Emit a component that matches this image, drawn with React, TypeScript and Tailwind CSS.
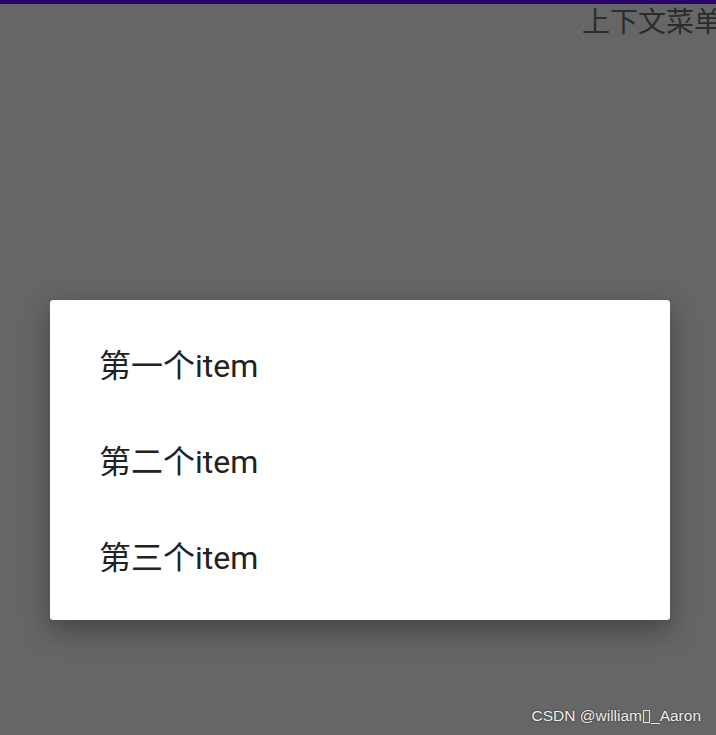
import React from "react";

export default function App() {
  const items = ["第一个item", "第二个item", "第三个item"];
  return (
    <div
      className="relative w-[716px] h-[735px] overflow-hidden bg-[#666666]"
      style={{ fontFamily: 'Roboto, "Noto Sans CJK SC", sans-serif' }}
    >
      <div className="h-[4px] bg-[#2a0566]" />
      <div className="pt-[5px] pl-[582px] whitespace-nowrap text-[28px] leading-[28px] text-[#2c2c2c]">
        上下文菜单
      </div>

      <div className="absolute inset-0 pt-[300px] pl-[50px] pr-[46px]">
        <div className="bg-white rounded-[3px] pt-[18px] pb-[14px] shadow-[0_10px_28px_rgba(0,0,0,0.35)]">
          {items.map((t) => (
            <div
              key={t}
              className="h-[96px] flex items-center pl-[49px] text-[32px] text-[#222222]"
            >
              {t}
            </div>
          ))}
        </div>
      </div>

      <div
        className="absolute right-[15px] bottom-[9px] flex items-center text-[15.5px] leading-[20px] text-[#eeeeee] [text-shadow:0_0_2px_rgba(0,0,0,0.7)]"
        style={{ fontFamily: '"Liberation Sans", "Noto Sans CJK SC", sans-serif' }}
      >
        <span>CSDN @william</span>
        <span className="inline-block w-[7px] h-[13px] border border-[#dddddd] mx-[1px]" />
        <span>_Aaron</span>
      </div>
    </div>
  );
}
